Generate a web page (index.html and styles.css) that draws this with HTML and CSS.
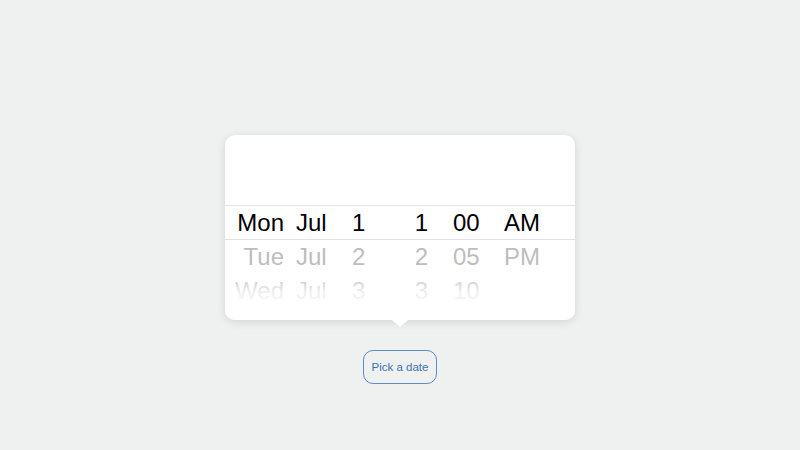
FILE: index.html
```html
<!DOCTYPE html>
<html lang="en">
<head>
  <meta charset="UTF-8">
  <title>Date picker</title>
  <link rel="stylesheet" href="styles.css">
</head>
<body>

  <!-- Popover -->
  <div class="popover">
    <div class="picker">
      <div class="col col-wk">
        <div class="cell sel">Mon</div>
        <div class="cell">Tue</div>
        <div class="cell">Wed</div>
      </div>
      <div class="col col-mon">
        <div class="cell sel">Jul</div>
        <div class="cell">Jul</div>
        <div class="cell">Jul</div>
      </div>
      <div class="col col-day">
        <div class="cell sel">1</div>
        <div class="cell">2</div>
        <div class="cell">3</div>
      </div>
      <div class="col col-hr">
        <div class="cell sel">1</div>
        <div class="cell">2</div>
        <div class="cell">3</div>
      </div>
      <div class="col col-min">
        <div class="cell sel">00</div>
        <div class="cell">05</div>
        <div class="cell">10</div>
      </div>
      <div class="col col-ampm">
        <div class="cell sel">AM</div>
        <div class="cell">PM</div>
      </div>
      <div class="band"></div>
      <div class="fade"></div>
    </div>
    <div class="arrow"></div>
  </div>

  <button class="pick-btn">Pick a date</button>

</body>
</html>
```

FILE: styles.css
```css
body {
  margin: 0;
  background-color: #eff0f0;
  font-family: "Liberation Sans", Arial, sans-serif;
  display: flex;
  flex-direction: column;
  align-items: center;
  padding-top: 135px;
}

.popover {
  position: relative;
  width: 350px;
  height: 185px;
  background: #fff;
  border-radius: 10px;
  box-shadow: 0 2px 10px rgba(0, 0, 0, 0.12);
}

.picker {
  position: relative;
  display: flex;
  padding-top: 71px;
  height: 114px;
  overflow: hidden;
  border-radius: 10px;
}

.col {
  display: flex;
  flex-direction: column;
  margin-left: 12px;
}

.cell {
  height: 34px;
  line-height: 34px;
  font-size: 24px;
  color: #bdbdbd;
  white-space: nowrap;
}

.cell.sel {
  color: #000;
}

.col-wk {
  margin-left: 0;
  width: 59px;
  text-align: right;
}

.col-mon {
  width: 44px;
}

.col-day {
  width: 32px;
}

.col-hr {
  width: 32px;
  text-align: right;
}

.col-min {
  margin-left: 25px;
  width: 39px;
}

.band {
  position: absolute;
  left: 0;
  right: 0;
  top: 70px;
  height: 33px;
  border-top: 1px solid #e3e3e3;
  border-bottom: 1px solid #e3e3e3;
  pointer-events: none;
}

.fade {
  position: absolute;
  left: 0;
  right: 0;
  top: 138px;
  height: 47px;
  background: linear-gradient(to bottom, rgba(255,255,255,0) 0%, rgba(255,255,255,0.75) 40%, #fff 85%);
  pointer-events: none;
}

.arrow {
  position: absolute;
  left: 50%;
  bottom: -7px;
  margin-left: -8px;
  width: 0;
  height: 0;
  border-left: 8px solid transparent;
  border-right: 8px solid transparent;
  border-top: 7px solid #fff;
}

.pick-btn {
  margin-top: 30px;
  height: 34px;
  padding: 0 8px;
  background: transparent;
  border: 1px solid #5a8cc6;
  border-radius: 10px;
  color: #3d70b2;
  font-family: "Liberation Sans", Arial, sans-serif;
  font-size: 11.5px;
}
```
